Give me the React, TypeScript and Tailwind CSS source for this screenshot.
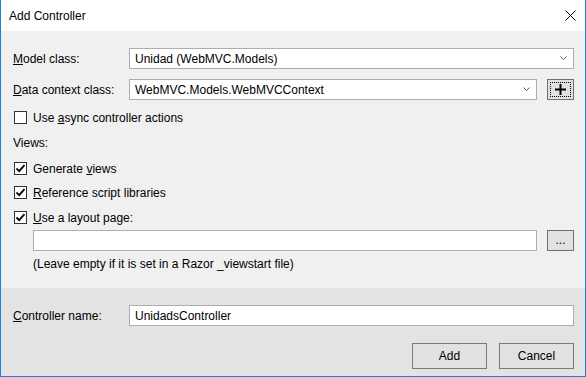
import React from "react";

const font = { fontFamily: '"Liberation Sans", Arial, sans-serif' };

function Chevron() {
    return (
        <svg width="7" height="5" viewBox="0 0 7 5" className="shrink-0">
            <path d="M0.5 0.5 L3.5 3.5 L6.5 0.5" fill="none" stroke="#606060" strokeWidth="1" />
        </svg>
    );
}

function Combo({ value }: { value: string }) {
    return (
        <div className="flex-1 h-[21px] bg-white border border-[#abadb3] flex items-center pl-[5px] pr-[6px]">
            <span className="flex-1 text-black">{value}</span>
            <Chevron />
        </div>
    );
}

function CheckBox({ checked }: { checked: boolean }) {
    return (
        <div className="w-[13px] h-[13px] bg-white border border-[#333333] flex items-center justify-center shrink-0">
            {checked && (
                <svg width="11" height="11" viewBox="0 0 11 11">
                    <path d="M1.5 5.5 L4.2 8.2 L9.5 2.2" fill="none" stroke="#000" strokeWidth="1.8" />
                </svg>
            )}
        </div>
    );
}

function CheckRow({ checked, children, className }: { checked: boolean; children: React.ReactNode; className: string }) {
    return (
        <div className={`flex items-center h-[13px] pl-[1px] ${className}`}>
            <CheckBox checked={checked} />
            <span className="ml-[6px] leading-none">{children}</span>
        </div>
    );
}

export default function App() {
    return (
        <div
            style={font}
            className="w-[586px] h-[377px] flex flex-col border-l border-r border-b border-[#1883d7] text-[12px] text-black bg-[#f0f0f0] overflow-hidden"
        >
            {/* Title bar */}
            <div className="h-[31px] bg-white flex items-center pl-[8px] pr-[9px] shrink-0">
                <span className="flex-1">Add Controller</span>
                <svg width="11" height="11" viewBox="0 0 11 11" className="-mt-[1px]">
                    <path d="M0.5 0.5 L10.5 10.5 M10.5 0.5 L0.5 10.5" stroke="#000" strokeWidth="1" />
                </svg>
            </div>

            {/* Main */}
            <div className="flex-1 flex flex-col pl-[12px] pr-[11px]">
                <div className="flex items-center h-[21px] mt-[17px]">
                    <span className="w-[116px]"><u>M</u>odel class:</span>
                    <Combo value="Unidad (WebMVC.Models)" />
                </div>
                <div className="flex items-center h-[21px] mt-[10px]">
                    <span className="w-[116px]"><u>D</u>ata context class:</span>
                    <Combo value="WebMVC.Models.WebMVCContext" />
                    <div className="ml-[10px] w-[27px] h-[21px] bg-[#e1e1e1] border border-[#707070] p-[2px]">
                        <div className="w-full h-full border border-dotted border-black flex items-center justify-center">
                            <svg width="11" height="11" viewBox="0 0 11 11">
                                <path d="M5.5 0 V11 M0 5.5 H11" stroke="#000" strokeWidth="2" />
                            </svg>
                        </div>
                    </div>
                </div>

                <CheckRow checked={false} className="mt-[11px]">
                    Use <u>a</u>sync controller actions
                </CheckRow>

                <div className="h-[16px] mt-[11px] flex items-center">Views:</div>

                <CheckRow checked className="mt-[11px]">
                    Generate <u>v</u>iews
                </CheckRow>
                <CheckRow checked className="mt-[11px]">
                    <u>R</u>eference script libraries
                </CheckRow>
                <CheckRow checked className="mt-[12px]">
                    <u>U</u>se a layout page:
                </CheckRow>

                <div className="flex items-center h-[21px] mt-[6px] pl-[20px]">
                    <div className="flex-1 h-[21px] bg-white border border-[#abadb3]" />
                    <div className="ml-[10px] w-[27px] h-[21px] bg-[#e1e1e1] border border-[#707070] flex items-center justify-center">
                        <span className="leading-none -mt-[2px]">...</span>
                    </div>
                </div>

                <div className="h-[16px] mt-[5px] pl-[20px] flex items-center">
                    (Leave empty if it is set in a Razor _viewstart file)
                </div>
            </div>

            {/* Bottom */}
            <div className="h-[88px] bg-[#e3e3e3] shrink-0 flex flex-col pl-[12px] pr-[11px]">
                <div className="flex items-center h-[21px] mt-[17px]">
                    <span className="w-[116px]"><u>C</u>ontroller name:</span>
                    <div className="flex-1 h-[21px] bg-white border border-[#abadb3] flex items-center pl-[5px]">
                        UnidadsController
                    </div>
                </div>
                <div className="flex justify-end gap-[12px] mt-[17px]">
                    <button className="w-[75px] h-[26px] bg-[#e1e1e1] border border-[#7a7a7a]">Add</button>
                    <button className="w-[75px] h-[26px] bg-[#e1e1e1] border border-[#7a7a7a]">Cancel</button>
                </div>
            </div>
        </div>
    );
}
